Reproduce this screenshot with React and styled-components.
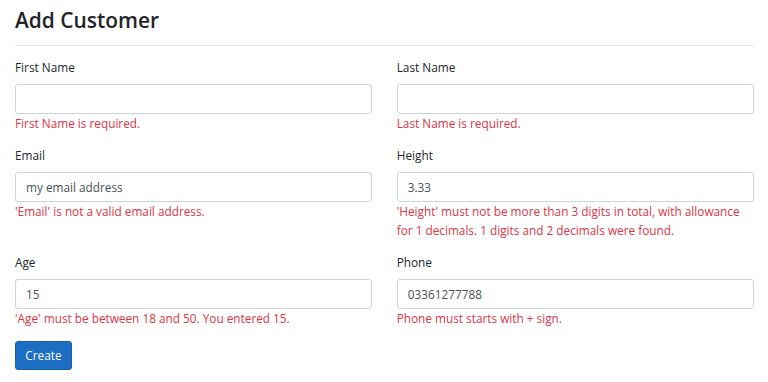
import React from "react";
import styled, { createGlobalStyle } from "styled-components";

const GlobalStyle = createGlobalStyle`
  html, body { margin: 0; padding: 0; background: #ffffff; }
  body {
    font-family: "Open Sans", "Noto Sans", sans-serif;
    font-size: 11.8px;
    color: #212529;
  }
  * { box-sizing: border-box; }
`;

const Page = styled.main`
  padding: 0 14px 0 15px;
`;

const Title = styled.h1`
  margin: 0;
  padding-top: 7.7px;
  font-size: 20.9px;
  line-height: 25px;
  font-weight: 600;
  color: #212529;
`;

const Divider = styled.hr`
  margin: 12.3px 0 12px;
  border: 0;
  border-top: 1px solid #e6e6e6;
  height: 0;
`;

const FormGrid = styled.div`
  display: grid;
  grid-template-columns: 1fr 1fr;
  column-gap: 24.4px;
  row-gap: 12px;
  align-items: start;
`;

const Field = styled.div`
  display: flex;
  flex-direction: column;
`;

const Label = styled.label`
  line-height: 19.6px;
  margin-bottom: 6.5px;
  color: #212529;
`;

const Input = styled.input`
  height: 30px;
  padding: 0 10px;
  border: 1px solid #ced4da;
  border-radius: 3px;
  font: inherit;
  font-size: 11.8px;
  color: #495057;
  background: #fff;
  outline: none;
`;

const Feedback = styled.div`
  line-height: 19.6px;
  color: #dc3545;
  font-size: 11.8px;
`;

const Actions = styled.div`
  margin-top: 12px;
`;

const Button = styled.button`
  height: 29.5px;
  padding: 0 9.3px;
  border: 1px solid #1861ac;
  border-radius: 3px;
  background: #1b6ec2;
  color: #fff;
  font: inherit;
  font-size: 11.8px;
  cursor: pointer;
`;

const fields = [
  { label: "First Name", value: "", error: "First Name is required." },
  { label: "Last Name", value: "", error: "Last Name is required." },
  { label: "Email", value: "my email address", error: "'Email' is not a valid email address." },
  {
    label: "Height",
    value: "3.33",
    error:
      "'Height' must not be more than 3 digits in total, with allowance for 1 decimals. 1 digits and 2 decimals were found.",
  },
  { label: "Age", value: "15", error: "'Age' must be between 18 and 50. You entered 15." },
  { label: "Phone", value: "03361277788", error: "Phone must starts with + sign." },
];

export default function App() {
  return (
    <>
      <GlobalStyle />
      <Page>
        <Title>Add Customer</Title>
        <Divider />
        <FormGrid>
          {fields.map((f) => (
            <Field key={f.label}>
              <Label>{f.label}</Label>
              <Input defaultValue={f.value} />
              <Feedback>{f.error}</Feedback>
            </Field>
          ))}
        </FormGrid>
        <Actions>
          <Button type="button">Create</Button>
        </Actions>
      </Page>
    </>
  );
}
